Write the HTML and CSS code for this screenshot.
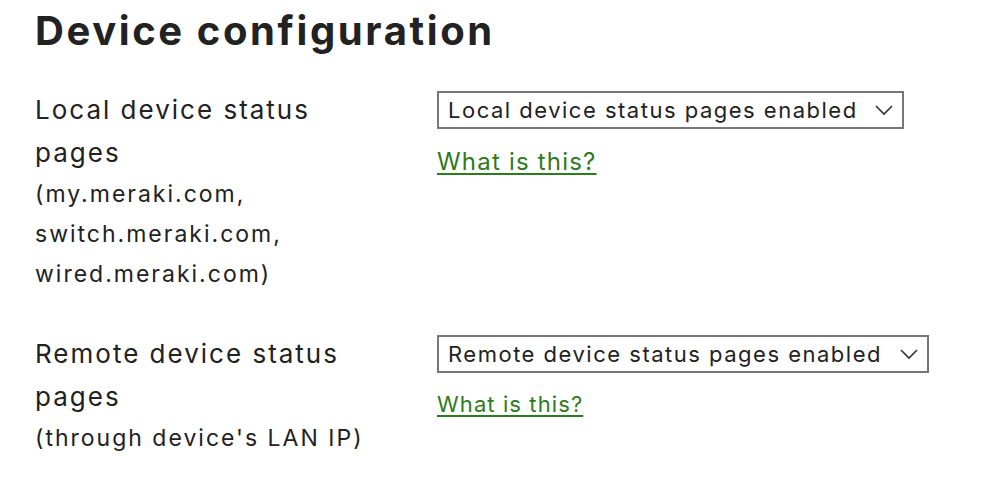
FILE: index.html
```html
<!DOCTYPE html>
<html lang="en">
<head>
    <meta charset="UTF-8">
    <title>Device configuration</title>
    <link rel="stylesheet" href="styles.css">
</head>
<body>
    <h1>Device configuration</h1>

    <div class="setting">
        <div class="setting-label">
            Local device status pages
            <span class="setting-note">(my.meraki.com, switch.meraki.com, wired.meraki.com)</span>
        </div>
        <div class="setting-control">
            <div class="select-wrap">
                <select class="select">
                    <option>Local device status pages enabled</option>
                    <option>Local device status pages disabled</option>
                </select>
                <svg class="chevron" width="20" height="12" viewBox="0 0 20 12"><path d="M2 2 L10 10 L18 2" fill="none" stroke="#333" stroke-width="1.6"/></svg>
            </div>
            <a href="#" class="help-link big">What is this?</a>
        </div>
    </div>

    <div class="setting">
        <div class="setting-label">
            Remote device status pages
            <span class="setting-note">(through device's LAN IP)</span>
        </div>
        <div class="setting-control">
            <div class="select-wrap">
                <select class="select">
                    <option>Remote device status pages enabled</option>
                    <option>Remote device status pages disabled</option>
                </select>
                <svg class="chevron" width="20" height="12" viewBox="0 0 20 12"><path d="M2 2 L10 10 L18 2" fill="none" stroke="#333" stroke-width="1.6"/></svg>
            </div>
            <a href="#" class="help-link">What is this?</a>
        </div>
    </div>
</body>
</html>
```

FILE: styles.css
```css
body {
    font-family: Inter, "Noto Sans", sans-serif;
    color: #222;
    background: #fff;
    margin: 0;
    padding: 0 35px;
}
h1 {
    font-size: 40px;
    font-weight: 700;
    line-height: 50px;
    margin: 6px 0 32px;
    letter-spacing: 2.6px;
}
.setting {
    display: grid;
    grid-template-columns: 402px 1fr;
    margin-bottom: 38px;
}
.setting-label {
    font-size: 26px;
    line-height: 43px;
    letter-spacing: 2px;
    padding-right: 50px;
}
.setting-note {
    display: block;
    font-size: 23px;
    line-height: 40px;
    letter-spacing: 2px;
}
.setting-control {
    padding-top: 3px;
}
.select-wrap {
    position: relative;
    display: inline-block;
}
.select {
    appearance: none;
    -webkit-appearance: none;
    font-family: inherit;
    font-size: 22px;
    letter-spacing: 1.5px;
    color: #222;
    height: 38px;
    padding: 0 38px 0 9px;
    border: 2px solid #777;
    border-radius: 0;
    background: #fff;
}
.chevron {
    position: absolute;
    right: 10px;
    top: 13px;
    pointer-events: none;
}
.help-link {
    display: block;
    margin-top: 18px;
    font-size: 22px;
    letter-spacing: 1.1px;
    color: #2e7a20;
    text-decoration: underline;
    text-underline-offset: 3px;
}
.help-link.big {
    font-size: 24px;
    letter-spacing: 1.2px;
}
```
